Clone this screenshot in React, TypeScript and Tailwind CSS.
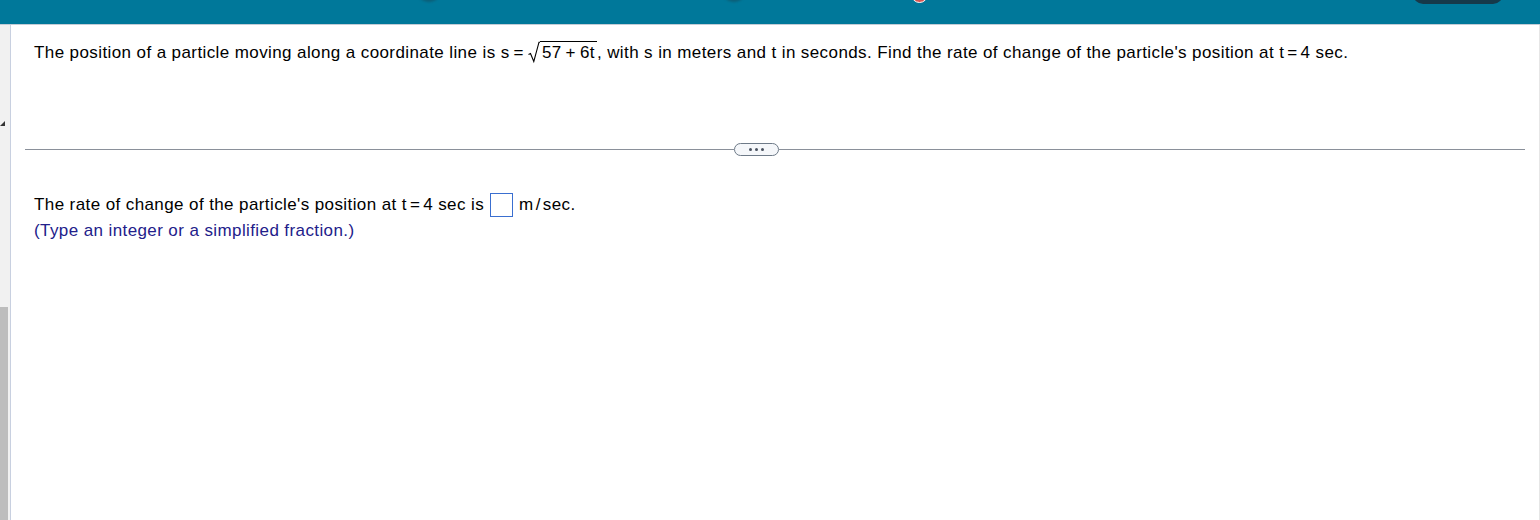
import React from "react";

function Radical({ children }: { children: React.ReactNode }) {
  return (
    <span className="inline-flex items-stretch align-middle relative top-[-1px]">
      <svg width="12" height="23" viewBox="0 0 12 23" className="shrink-0">
        <path d="M0.5 13.5 L2.5 12.5 L5.8 20.5 L11 1.2 L12 1.2" fill="none" stroke="#000" strokeWidth="1.1" />
      </svg>
      <span className="border-t border-black pt-[1px] px-[2px] leading-[20px]">{children}</span>
    </span>
  );
}

export default function App() {
  return (
    <div className="w-full h-[520px] flex flex-col overflow-hidden bg-white font-['Liberation_Sans',Arial,sans-serif] text-[17px] tracking-[0.4px] text-black">
      {/* top bar */}
      <div className="relative h-[25px] shrink-0 bg-[#00789a] border-b border-[#c3ccd6]">
        <div className="absolute left-[418px] top-[-18px] w-[22px] h-[20px] rounded-full bg-[#0b5f78] blur-[1px]" />
        <div className="absolute left-[723px] top-[-18px] w-[22px] h-[20px] rounded-full bg-[#0b5f78] blur-[1px]" />
        <div className="absolute left-[911px] top-[-16px] w-[17px] h-[19px] rounded-full bg-[#d9534f] border border-white" />
        <div className="absolute left-[1413px] top-[-20px] w-[90px] h-[24px] rounded-[10px] bg-[#16394a]" />
      </div>

      <div className="flex flex-1 min-h-0">
        {/* left rail */}
        <div className="w-[10px] shrink-0 bg-[#f1f1f1] flex flex-col">
          <div className="h-[96px]" />
          <div className="w-0 h-0 border-l-[5px] border-l-transparent border-b-[5px] border-b-[#333]" />
          <div className="flex-1" />
          <div className="h-[213px] w-[8px] bg-[#bdbdbd]" />
        </div>
        <div className="w-[1px] shrink-0 bg-[#c8d0e0]" />

        {/* main */}
        <div className="flex-1 min-w-0 flex flex-col pr-[10px]">
          <p className="pl-[23px] pt-[16px] leading-[24px] whitespace-nowrap">
            The position of a particle moving along a coordinate line is s<span className="mx-[4px]">=</span>
            <Radical>57<span className="mx-[4px]">+</span>6t</Radical>, with s in meters and t in seconds. Find the rate of change of the particle's position at t<span className="mx-[3px]">=</span>4 sec.
          </p>

          <div className="mt-[78px] ml-[14px] mr-[4px] flex items-center">
            <div className="w-[709px] h-[1px] bg-[#8a909a]" />
            <button className="w-[45px] h-[13px] rounded-full border border-[#6e7a88] bg-[#f5f7fa] flex items-center justify-center gap-[3px]">
              <span className="w-[3px] h-[3px] rounded-full bg-[#4a5260]" />
              <span className="w-[3px] h-[3px] rounded-full bg-[#4a5260]" />
              <span className="w-[3px] h-[3px] rounded-full bg-[#4a5260]" />
            </button>
            <div className="flex-1 h-[1px] bg-[#8a909a]" />
          </div>

          <div className="pl-[23px] mt-[36px]">
            <p className="leading-[26px] flex items-center whitespace-nowrap">
              The rate of change of the particle's position at t<span className="mx-[3px]">=</span>4 sec is
              <span className="inline-block w-[23px] h-[24px] border border-[#3a6fd0] ml-[6px] mr-[6px]" />
              m<span className="mx-[2px]">/</span>sec.
            </p>
            <p className="leading-[26px] text-[#22208a]">(Type an integer or a simplified fraction.)</p>
          </div>
        </div>
        <div className="w-[1px] shrink-0 bg-[#e6e6e6]" />
      </div>
    </div>
  );
}
